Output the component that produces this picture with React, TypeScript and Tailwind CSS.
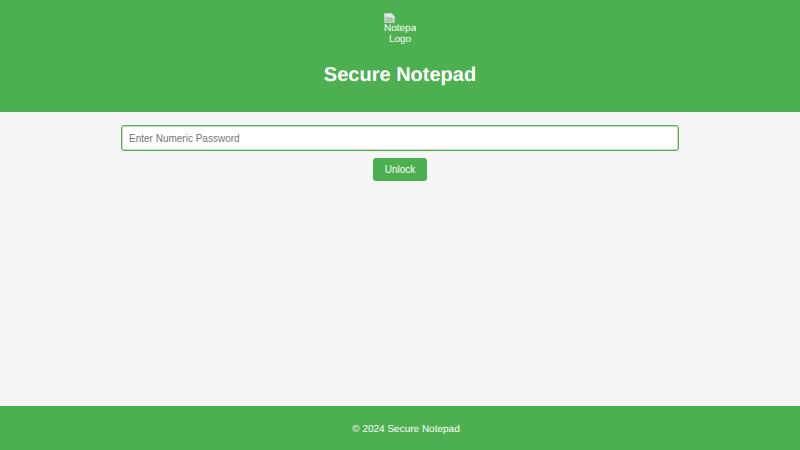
export default function App() {
  return (
    <div className="flex h-[450px] w-[800px] flex-col overflow-hidden bg-[#f5f5f5] font-['Liberation_Sans',Arial,sans-serif] [text-rendering:geometricPrecision]">
      <header className="flex h-[112px] flex-col items-center bg-[#4caf50] pt-[12.5px] text-white">
        <div className="h-[33px] w-[32px] overflow-hidden text-center text-[10px] leading-[11.5px]">
          <svg width="11" height="10" viewBox="0 0 16 15" className="block">
            <path d="M0.5 0.5H11L15.5 5V14.5H0.5Z" fill="#dfe6f0" stroke="#c4ccd8" />
            <path d="M1.5 8L5 5L8 7.5L11 6L14.5 9V13.5H1.5Z" fill="#a9c9a8" />
          </svg>
          <div>Notepad Logo</div>
        </div>
        <h1 className="mt-[18px] text-[20px] leading-[23px] font-bold">Secure Notepad</h1>
      </header>
      <main className="flex flex-1 flex-col items-center pt-[13px]">
        <input
          type="password"
          placeholder="Enter Numeric Password"
          className="h-[26px] w-[558px] rounded-[3px] border border-[#4caf50] bg-white px-[7px] text-[10px] shadow-[inset_0_0_0_1px_rgba(76,175,80,0.35)] outline-none placeholder:text-[#757575]"
        />
        <button className="mt-[7px] h-[23px] w-[54px] rounded-[3px] bg-[#4caf50] text-[10px] text-white">
          Unlock
        </button>
      </main>
      <footer className="flex h-[44px] items-center justify-center bg-[#4caf50] pt-[2px] pl-[12px] text-[10px] text-white">
        © 2024 Secure Notepad
      </footer>
    </div>
  );
}
